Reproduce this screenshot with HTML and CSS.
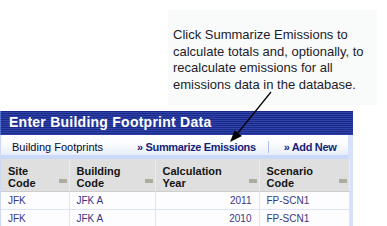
FILE: index.html
```html
<!DOCTYPE html>
<html lang="en">
<head>
    <meta charset="UTF-8">
    <title>Enter Building Footprint Data</title>
    <link rel="stylesheet" href="styles.css">
</head>
<body>
    <div class="note">
        Click Summarize Emissions to<br>
        calculate totals and, optionally, to<br>
        recalculate emissions for all<br>
        emissions data in the database.
    </div>

    <div class="panel">
        <div class="panel-title">Enter Building Footprint Data</div>
        <div class="panel-body">
            <div class="panel-main">
                <div class="toolbar">
                    <span class="tool-label">Building Footprints</span>
                    <a class="tool-link summarize" href="#">&raquo; Summarize Emissions</a>
                    <span class="tool-sep"></span>
                    <a class="tool-link add" href="#">&raquo; Add New</a>
                </div>

                <table class="grid">
                    <colgroup>
                        <col style="width: 68px">
                        <col style="width: 86px">
                        <col style="width: 104px">
                        <col style="width: 90px">
                    </colgroup>
                    <thead>
                        <tr>
                            <th><div class="th-in"><span>Site<br>Code</span><i class="sort"></i></div></th>
                            <th><div class="th-in"><span>Building<br>Code</span><i class="sort"></i></div></th>
                            <th><div class="th-in"><span>Calculation<br>Year</span><i class="sort"></i></div></th>
                            <th><div class="th-in"><span>Scenario<br>Code</span><i class="sort"></i></div></th>
                        </tr>
                    </thead>
                    <tbody>
                        <tr>
                            <td>JFK</td>
                            <td>JFK A</td>
                            <td class="num">2011</td>
                            <td>FP-SCN1</td>
                        </tr>
                        <tr>
                            <td>JFK</td>
                            <td>JFK A</td>
                            <td class="num">2010</td>
                            <td>FP-SCN1</td>
                        </tr>
                    </tbody>
                </table>
            </div>
        </div>
    </div>

    <!-- callout arrow drawn over the page -->
    <svg class="pointer" width="387" height="226" viewBox="0 0 387 226">
        <line x1="271" y1="92" x2="237" y2="134" stroke="#000" stroke-width="1.2"/>
        <polygon points="230,142 234.5,130.5 242,136" fill="#000"/>
    </svg>
</body>
</html>
```

FILE: styles.css
```css
body {
    margin: 0;
    width: 387px;
    height: 226px;
    overflow: hidden;
    position: relative;
    background: #fff;
    font-family: "Liberation Sans", Arial, sans-serif;
}
.note {
    margin: 10px 0 6px 168px;
    width: 209px;
    height: 95px;
    box-sizing: border-box;
    padding: 17px 0 0 5px;
    background: #f9fbfb;
    color: #1c1c2a;
    font-size: 13px;
    line-height: 16.7px;
    white-space: nowrap;
}
.panel {
    width: 353px;
}
.panel-title {
    height: 24px;
    box-sizing: border-box;
    padding-left: 8px;
    border-left: 1px solid #5070cc;
    background: repeating-linear-gradient(to bottom, #1b2887 0, #1b2887 1px, #2f45a9 1px, #2f45a9 2px);
    color: #fff;
    font-size: 14px;
    font-weight: bold;
    letter-spacing: 0.25px;
    line-height: 22px;
}
.panel-body {
    background: #d6e2fb;
    height: 100px;
}
.panel-main {
    width: 348px;
    box-sizing: border-box;
    border-left: 1px solid #cdd9f3;
    background: #fff;
}
.toolbar {
    display: flex;
    height: 24px;
    box-sizing: border-box;
    padding-top: 6px;
    border-bottom: 4px solid #c9d9f7;
    background: linear-gradient(to bottom, #ffffff, #fbfcfe 40%, #e8eef9);
    font-size: 11px;
    line-height: 13px;
}
.tool-label {
    margin-left: 11px;
    color: #0a0a30;
}
.tool-link {
    color: #161e78;
    font-weight: bold;
    letter-spacing: -0.35px;
    text-decoration: none;
}
.summarize {
    margin-left: 34px;
}
.tool-sep {
    width: 1px;
    height: 12px;
    margin: 0 0 0 12px;
    background: #a9c1ea;
}
.add {
    margin-left: 15px;
}
.grid {
    width: 347px;
    border-collapse: collapse;
    table-layout: fixed;
}
.grid th {
    padding: 6px 2px 2px 7px;
    background: #dfdfdf;
    border-right: 1px solid #ececec;
    border-bottom: 1px solid #cfcfcf;
    color: #141414;
    font-size: 11px;
    font-weight: bold;
    line-height: 12px;
    text-align: left;
}
.th-in {
    display: flex;
    justify-content: space-between;
    align-items: flex-end;
}
.sort {
    width: 8px;
    height: 4px;
    margin-bottom: 6px;
    background: #adad9f;
}
.grid td {
    height: 17px;
    padding: 0 7px;
    border-right: 1px solid #dde5f5;
    border-bottom: 1px solid #dde5f5;
    background: #fdfdff;
    color: #3a3585;
    font-size: 10px;
    line-height: 17px;
    white-space: nowrap;
}
.grid td.num {
    text-align: right;
}
.pointer {
    position: absolute;
    left: 0;
    top: 0;
    pointer-events: none;
}
```
